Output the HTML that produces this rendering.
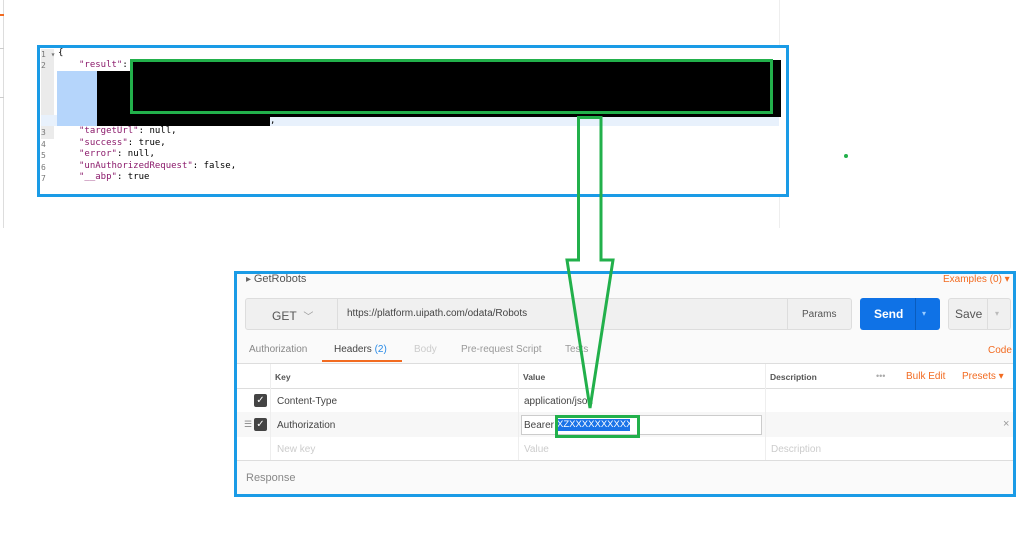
<!DOCTYPE html>
<html><head><meta charset="utf-8"><style>
*{margin:0;padding:0;box-sizing:border-box}
body{width:1035px;height:550px;background:#fff;position:relative;overflow:hidden;font-family:"Liberation Sans",sans-serif}
.a{position:absolute}
.mono{font-family:"DejaVu Sans Mono","Liberation Mono",monospace;font-size:9px;line-height:11.5px;color:#000;white-space:pre}
.k{color:#8b1a6b}
.t{font-size:10px;color:#555}
.o{color:#f26b21}
</style></head><body>
<div class="a" style="left:0;top:0;width:780px;height:228px;background:#fff;border-right:1px solid #eee"></div>
<div class="a" style="left:3px;top:0;width:1px;height:228px;background:#ddd"></div>
<div class="a" style="left:0;top:14px;width:4px;height:2px;background:#f26b21"></div>
<div class="a" style="left:0;top:48px;width:4px;height:1px;background:#ccc"></div>
<div class="a" style="left:0;top:97px;width:4px;height:1px;background:#ccc"></div>

<div class="a" style="left:37px;top:45px;width:752px;height:152px;border:3px solid #1a9be6;background:#fff"></div>
<div class="a" style="left:41px;top:49px;width:13px;height:90px;background:#ebebeb"></div>
<div class="a" style="left:41px;top:115px;width:738px;height:11px;background:#e8f1fc"></div>
<div class="a" style="left:57px;top:71px;width:40px;height:55px;background:#b5d5fb"></div>
<div class="a" style="left:97px;top:71px;width:173px;height:55px;background:#000"></div>
<div class="a" style="left:130px;top:60px;width:651px;height:57px;background:#000"></div>
<div class="a" style="left:130px;top:59px;width:643px;height:55px;border:3px solid #22b04b"></div>
<div class="a mono" style="left:41px;top:49px;color:#777;font-size:8px;line-height:11px">1 ▾
2</div>
<div class="a mono" style="left:58px;top:48px">{</div>
<div class="a mono" style="left:79px;top:60px"><span class="k">"result"</span>: </div>
<div class="a mono" style="left:270px;top:116px">,</div>
<div class="a mono" style="left:41px;top:127px;color:#777;font-size:8px">3
4
5
6
7</div>
<div class="a mono" style="left:79px;top:126px"><span class="k">"targetUrl"</span>: null,
<span class="k">"success"</span>: true,
<span class="k">"error"</span>: null,
<span class="k">"unAuthorizedRequest"</span>: false,
<span class="k">"__abp"</span>: true</div>
<div class="a" style="left:40px;top:182px;width:745px;height:12px;background:#fff"></div>
<div class="a" style="left:844px;top:154px;width:4px;height:4px;border-radius:50%;background:#22b04b"></div>

<div class="a" style="left:234px;top:271px;width:782px;height:226px;border:3px solid #1a9be6;background:#fafafa"></div>
<div class="a t" style="left:246px;top:273px;font-size:10px;color:#666">▸ <span style="font-size:11px;color:#555">GetRobots</span></div>
<div class="a o" style="left:943px;top:274px;font-size:10px">Examples (0) ▾</div>
<div class="a" style="left:245px;top:298px;width:607px;height:32px;background:#f0f0f0;border:1px solid #ddd;border-radius:3px"></div>
<div class="a" style="left:337px;top:299px;width:1px;height:30px;background:#ddd"></div>
<div class="a" style="left:787px;top:299px;width:1px;height:30px;background:#ddd"></div>
<div class="a" style="left:272px;top:308px;font-size:12px;color:#555">GET&nbsp;&nbsp;<span style="font-size:10px;color:#999">﹀</span></div>
<div class="a" style="left:347px;top:308px;font-size:10px;color:#444">https://platform.uipath.com/odata/Robots</div>
<div class="a" style="left:802px;top:309px;font-size:10px;color:#555">Params</div>
<div class="a" style="left:860px;top:298px;width:80px;height:32px;background:#0f72e6;border-radius:3px"></div>
<div class="a" style="left:915px;top:298px;width:1px;height:32px;background:#0a5cbd"></div>
<div class="a" style="left:874px;top:307px;font-size:12px;font-weight:bold;color:#fff">Send</div>
<div class="a" style="left:922px;top:309px;font-size:8px;color:#9cf">▾</div>
<div class="a" style="left:948px;top:298px;width:63px;height:32px;background:#f0f0f0;border:1px solid #ddd;border-radius:3px"></div>
<div class="a" style="left:987px;top:299px;width:1px;height:30px;background:#ddd"></div>
<div class="a" style="left:955px;top:307px;font-size:12px;color:#555">Save</div>
<div class="a" style="left:995px;top:309px;font-size:8px;color:#bbb">▾</div>
<div class="a" style="left:249px;top:344px;font-size:10px;color:#888">Authorization</div>
<div class="a" style="left:334px;top:344px;font-size:10px;color:#444">Headers <span style="color:#2a8be6">(2)</span></div>
<div class="a" style="left:322px;top:360px;width:80px;height:2px;background:#f26b21"></div>
<div class="a" style="left:414px;top:344px;font-size:10px;color:#ccc">Body</div>
<div class="a" style="left:461px;top:344px;font-size:10px;color:#999">Pre-request Script</div>
<div class="a" style="left:565px;top:344px;font-size:10px;color:#999">Tests</div>
<div class="a o" style="left:988px;top:345px;font-size:10px">Code</div>
<div class="a" style="left:237px;top:363px;width:776px;height:1px;background:#ddd"></div>
<div class="a" style="left:237px;top:364px;width:776px;height:96px;background:#fff"></div>
<div class="a" style="left:237px;top:388px;width:776px;height:1px;background:#ddd"></div>
<div class="a" style="left:237px;top:412px;width:776px;height:25px;background:#f7f7f7"></div>
<div class="a" style="left:237px;top:460px;width:776px;height:1px;background:#ddd"></div>
<div class="a" style="left:270px;top:364px;width:1px;height:96px;background:#eee"></div>
<div class="a" style="left:518px;top:364px;width:1px;height:96px;background:#eee"></div>
<div class="a" style="left:765px;top:364px;width:1px;height:96px;background:#eee"></div>
<div class="a" style="left:275px;top:372px;font-size:8.5px;font-weight:bold;color:#555">Key</div>
<div class="a" style="left:523px;top:372px;font-size:8.5px;font-weight:bold;color:#555">Value</div>
<div class="a" style="left:770px;top:372px;font-size:8.5px;font-weight:bold;color:#555">Description</div>
<div class="a" style="left:876px;top:371px;font-size:9px;color:#aaa">•••</div>
<div class="a o" style="left:906px;top:371px;font-size:10px">Bulk Edit</div>
<div class="a o" style="left:962px;top:371px;font-size:10px">Presets ▾</div>
<div class="a" style="left:254px;top:394px;width:13px;height:13px;background:#444;border-radius:2px;color:#fff;font-size:10px;line-height:13px;text-align:center">✓</div>
<div class="a" style="left:254px;top:418px;width:13px;height:13px;background:#444;border-radius:2px;color:#fff;font-size:10px;line-height:13px;text-align:center">✓</div>
<div class="a" style="left:244px;top:419px;font-size:9px;color:#888">☰</div>
<div class="a" style="left:277px;top:396px;font-size:10px;color:#444">Content-Type</div>
<div class="a" style="left:277px;top:420px;font-size:10px;color:#444">Authorization</div>
<div class="a" style="left:277px;top:444px;font-size:10px;color:#ccc">New key</div>
<div class="a" style="left:524px;top:396px;font-size:10px;color:#444">application/json</div>
<div class="a" style="left:521px;top:415px;width:241px;height:20px;background:#fff;border:1px solid #ccc"></div>
<div class="a" style="left:524px;top:420px;font-size:10px;color:#444">Bearer</div>
<div class="a" style="left:557px;top:419px;width:73px;height:12px;background:#1a73e8;color:#fff;font-size:9.5px;line-height:12px;overflow:hidden;white-space:nowrap">XZXXXXXXXXXX</div>
<div class="a" style="left:555px;top:415px;width:85px;height:23px;border:3px solid #22b04b"></div>
<div class="a" style="left:524px;top:444px;font-size:10px;color:#ccc">Value</div>
<div class="a" style="left:771px;top:444px;font-size:10px;color:#ccc">Description</div>
<div class="a" style="left:1003px;top:418px;font-size:11px;color:#999">×</div>
<div class="a" style="left:246px;top:472px;font-size:11px;color:#888">Response</div>

<svg class="a" style="left:0;top:0" width="1035" height="550">
<path d="M578.5 117.5 L601 117.5 L601 260 L613 260 L590 408 L567 260 L578.5 260 Z" fill="none" stroke="#22b04b" stroke-width="3" stroke-linejoin="miter"/>
</svg>
</body></html>
